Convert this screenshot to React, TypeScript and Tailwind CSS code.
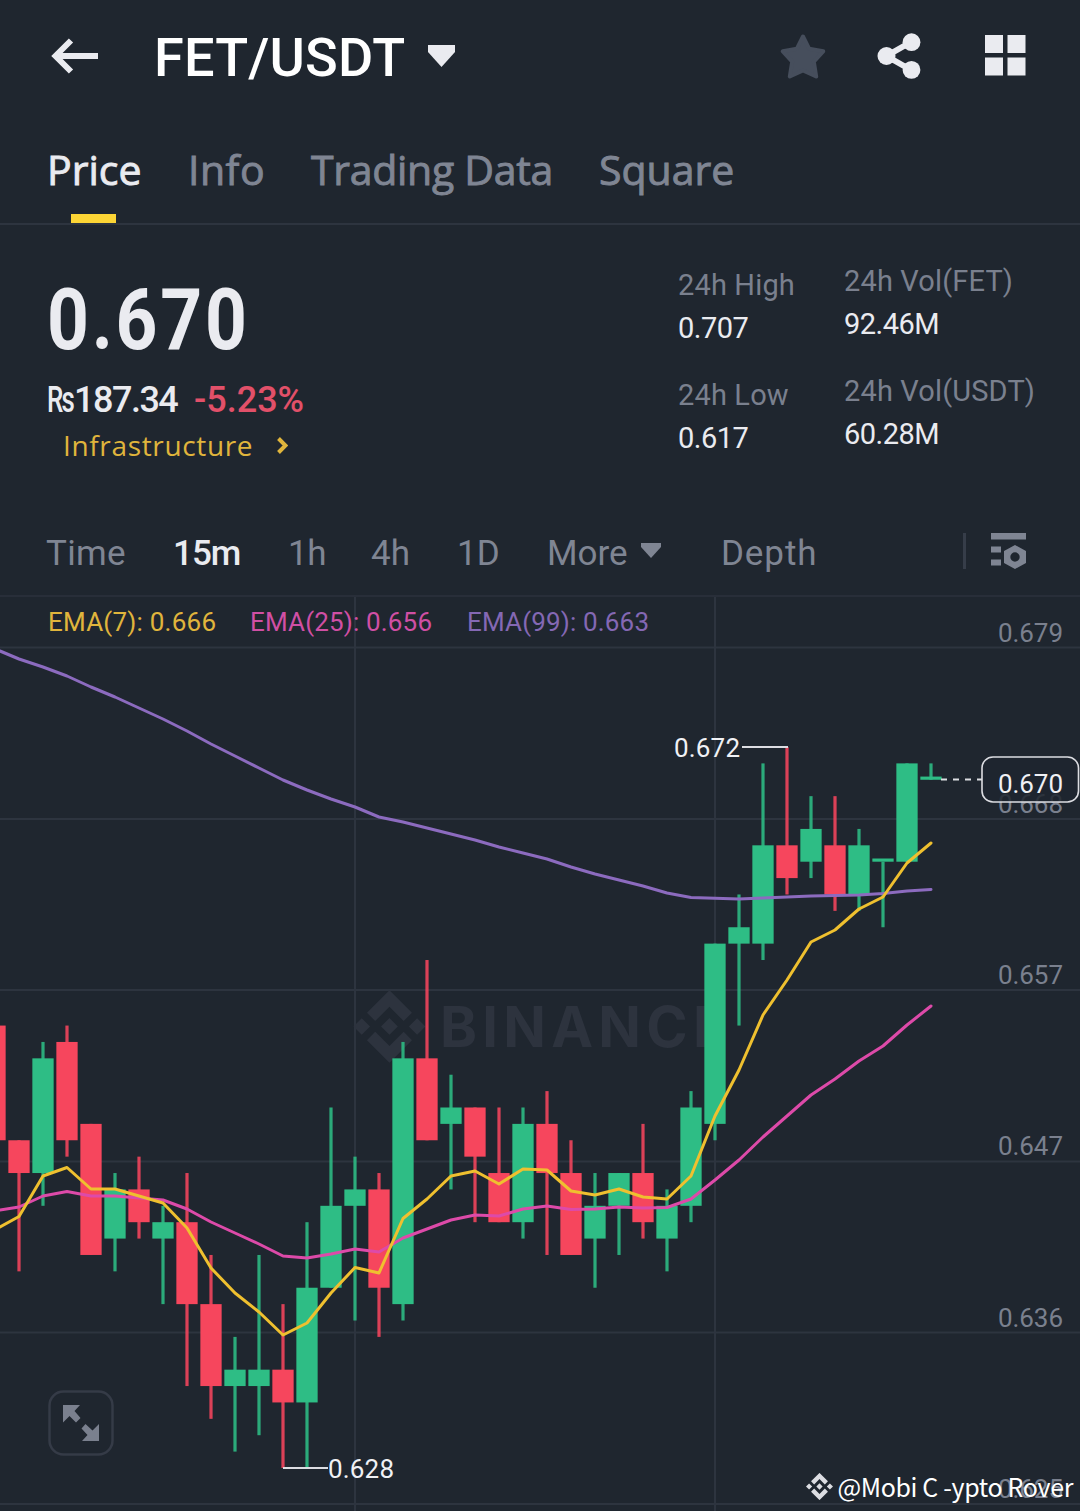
import React from 'react';

type Candle = [open: number, close: number, high: number, low: number];

// prices in thousandths, oldest first
const candles: Candle[] = [
  [655, 648, 655, 648], [648, 646, 648, 640], [646, 653, 654, 644], [654, 648, 655, 647],
  [649, 641, 649, 641], [642, 645, 646, 640], [645, 643, 647, 642], [642, 643, 644, 638],
  [643, 638, 646, 633], [638, 633, 641, 631], [633, 634, 636, 629], [633, 634, 641, 630],
  [634, 632, 638, 628], [632, 639, 643, 628], [639, 644, 650, 639], [644, 645, 647, 637],
  [645, 639, 646, 636], [638, 653, 654, 637], [653, 648, 659, 648], [649, 650, 652, 645],
  [650, 647, 650, 643], [646, 643, 650, 643], [643, 649, 650, 642], [649, 646, 651, 641],
  [646, 641, 648, 641], [642, 644, 646, 639], [644, 646, 646, 641], [646, 643, 649, 642],
  [642, 644, 645, 640], [644, 650, 651, 643], [649, 660, 660, 648], [660, 661, 663, 655],
  [660, 666, 671, 659], [666, 664, 672, 663], [665, 667, 669, 664], [666, 663, 669, 662],
  [663, 666, 667, 662], [665, 665, 665, 661], [665, 671, 671, 665], [670, 670, 671, 670],
];

const ema7 = '0,1227 19,1216.5 43,1176 67,1167.5 91,1189 115,1189 139,1196 163,1203 187,1228 211,1268 235,1293 259,1312 283,1335 307,1323 331,1293 355,1267.5 379,1273 403,1218.5 427,1199 451,1176 475,1171 499,1184 523,1169 547,1170 571,1191 595,1195 619,1189 643,1197 667,1199 691,1176 715,1116 739,1070 763,1015 787,980 811,942 835,930 859,909 883,897 907,863 931,843';
const ema25 = '0,1210 19,1207 43,1196 67,1191.5 91,1196 115,1196 139,1198 163,1200 187,1209 211,1222 235,1233 259,1244 283,1256 307,1258 331,1254 355,1249 379,1252 403,1238 427,1229 451,1220 475,1215 499,1216 523,1209 547,1206 571,1209.5 595,1209 619,1207 643,1208 667,1207.5 691,1199 715,1180 739,1160 763,1137 787,1116 811,1095 835,1079 859,1061 883,1046 907,1025 931,1006';
const ema99 = '0,651 19,659 43,667 67,676 91,687 115,697 139,708 163,719 187,731 211,744 235,756 259,768 283,780 307,790 331,799 355,807 379,817 403,822 427,828 451,834 475,840 499,847 523,853 547,859 571,867 595,874 619,880 643,886 667,893 691,897.5 739,899 763,898 811,896 835,895.5 859,895 883,893.5 907,891 931,889.5';

const priceY = (price: number) => 747 + (672 - price) * 16.386;

const gridRows = [647.5, 819, 990, 1161.5, 1332.5, 1504];
const axisLabels = [
  { text: '0.679', y: 642 },
  { text: '0.668', y: 813 },
  { text: '0.657', y: 984 },
  { text: '0.647', y: 1155 },
  { text: '0.636', y: 1327 },
  { text: '0.625', y: 1498 },
];

const BinanceMark: React.FC = () => (
  <path d="M38.2 53.7 63.3 28.7 88.3 53.7 102.9 39.2 63.3 -.4 23.7 39.1zM0 63.3 14.5 48.7 29.1 63.3 14.5 77.8zM38.2 72.8 63.3 97.9 88.3 72.8 102.9 87.4 63.3 127 23.7 87.4zM97.5 63.3 112 48.7 126.6 63.3 112 77.8zM48.5 63.3 63.3 48.5 78 63.3 63.3 78z" />
);

const Header: React.FC = () => (
  <header className="flex h-28 items-center pl-[51px] pr-[54px] text-[#eaebf0]">
    <svg className="h-9 w-[47px] shrink-0" viewBox="0 0 47 36" fill="none" stroke="currentColor" strokeWidth="6">
      <path d="M47 18H5M20 2.5 4.5 18 20 33.5" />
    </svg>
    <h1 className="ml-[56px] w-[253px] whitespace-nowrap pt-1 text-[54px] font-medium leading-none tracking-[0.2px] text-white">FET/USDT</h1>
    <svg className="ml-[21px] h-[22px] w-[27px]" viewBox="0 0 27 22" fill="currentColor">
      <path d="M0 0H27V7L13.5 22 0 7z" />
    </svg>
    <svg className="ml-auto h-[47px] w-[46px] text-[#464e5c]" viewBox="0 0 46 47" fill="currentColor" stroke="currentColor" strokeWidth="4" strokeLinejoin="round">
      <path d="M23 3.5 29.2 15.8 43.2 18.3 33.8 28.6 36.2 43.5 23 37.5 9.8 43.5 12.2 28.6 2.8 18.3 16.8 15.8z" />
    </svg>
    <svg className="ml-[51px] h-[46px] w-[44px]" viewBox="0 0 44 46" fill="currentColor">
      <path d="M34 9 9.5 23 34 37" fill="none" stroke="currentColor" strokeWidth="6" />
      <circle cx="34.5" cy="9.2" r="8.9" />
      <circle cx="9.5" cy="23" r="9" />
      <circle cx="34.5" cy="36.9" r="8.9" />
    </svg>
    <svg className="mb-px ml-[64px] h-[41px] w-[41px]" viewBox="0 0 41 41" fill="currentColor">
      <path d="M0 0h18v18H0zM22.5 0h18v18h-18zM0 22.5h18v18H0zM22.5 22.5h18v18h-18z" />
    </svg>
  </header>
);

const Tabs: React.FC = () => (
  <nav className="flex h-[113px] border-b-2 border-[#2d343f] pl-[47px] pt-[26px] font-['Open_Sans'] text-[41px] leading-[62px] text-[#7f8593] [-webkit-text-stroke:0.9px_currentColor]">
    <div className="flex w-[141px] flex-col justify-between text-[#eaebf0]">
      <span>Price</span>
      <span className="ml-6 h-[9px] w-[45px] bg-[#fcd535]" />
    </div>
    <span className="w-[123px] tracking-[0.5px]">Info</span>
    <span className="w-[288px] whitespace-nowrap tracking-[-0.3px]">Trading Data</span>
    <span>Square</span>
  </nav>
);

const Stat: React.FC<{ label: string; value: string }> = ({ label, value }) => (
  <div className="h-[110px] whitespace-nowrap">
    <div className="text-[29px] leading-[42px] tracking-[0.15px] text-[#7a808e]">{label}</div>
    <div className="text-[29px] leading-[45px] tracking-[-0.5px] text-[#eaebf0]">{value}</div>
  </div>
);

const Summary: React.FC = () => (
  <section className="flex h-[281px] pl-[47px]">
    <div className="w-[631px] pt-[50px]">
      <div className="h-[98px] w-[250px] origin-left scale-x-[.85] text-[86px] font-bold leading-[90px] tracking-[3.2px] text-[#eaebf0]">0.670</div>
      <div className="flex h-[52px] items-center whitespace-nowrap pt-0.5 text-[36px] font-medium leading-none">
        <span className="w-[27px] origin-left scale-x-[.72] text-[#eaebf0]">₨</span>
        <span className="w-[120px] tracking-[-1.5px] text-[#eaebf0]">187.34</span>
        <span className="text-[#e25069]">-5.23%</span>
      </div>
      <div className="flex h-[40px] items-center pl-4 font-['Open_Sans'] text-[28px] leading-none text-[#e0b53c]">
        <span className="w-[214px] tracking-[0.65px]">Infrastructure</span>
        <svg className="h-[17px] w-[11px]" viewBox="0 0 11 17" fill="none" stroke="currentColor" strokeWidth="4">
          <path d="M1.5 1.5 8.5 8.5 1.5 15.5" />
        </svg>
      </div>
    </div>
    <div className="w-[166px] pt-[39px]">
      <Stat label="24h High" value="0.707" />
      <Stat label="24h Low" value="0.617" />
    </div>
    <div className="pt-[35px]">
      <Stat label="24h Vol(FET)" value="92.46M" />
      <Stat label="24h Vol(USDT)" value="60.28M" />
    </div>
  </section>
);

const IntervalBar: React.FC = () => (
  <div className="flex h-[91px] items-center whitespace-nowrap border-b-2 border-[#282e39] pl-[46px] text-[35px] leading-none text-[#7f8593]">
    <div className="flex pt-1.5">
      <span className="w-[127px] tracking-[0.3px]">Time</span>
      <span className="w-[115px] font-medium tracking-[-1px] text-[#eaebf0]">15m</span>
      <span className="w-[83px] tracking-[-0.5px]">1h</span>
      <span className="w-[86px]">4h</span>
      <span className="w-[90px]">1D</span>
      <span className="w-[94px]">More</span>
    </div>
    <svg className="h-[15px] w-5" viewBox="0 0 20 15" fill="currentColor">
      <path d="M0 0H20V4L10 15 0 4z" />
    </svg>
    <span className="ml-[60px] w-[242px] pt-1.5 tracking-[0.9px]">Depth</span>
    <span className="h-9 w-[3px] bg-[#363d49]" />
    <svg className="ml-[25px] mt-px h-9 w-[35px]" viewBox="0 0 35 36" fill="currentColor" fillRule="evenodd">
      <path d="M0 0H35V6.5H0zM0 13.5H10V19.5H0zM0 26.5H10V32.5H0z" />
      <path d="M24 12 35 18V30L24 36 13 30V18zM24 19.3a4.7 4.7 0 1 0 0 9.4 4.7 4.7 0 1 0 0-9.4z" />
    </svg>
  </div>
);

const Chart: React.FC = () => (
  <svg className="block h-[914px] w-[1080px]" viewBox="0 597 1080 914" fontSize="26">
    <g stroke="#2d343f" strokeWidth="2">
      {gridRows.map((y) => <line key={y} x1="0" x2="1080" y1={y} y2={y} />)}
      <line x1="355" x2="355" y1="597" y2="1511" />
      <line x1="715" x2="715" y1="597" y2="1511" />
    </g>

    <g fill="#2d333e">
      <g transform="translate(353.5 990.5) scale(.568)"><BinanceMark /></g>
      <text x="440" y="1047" fontFamily="Inter" fontWeight="700" fontSize="56" textLength="287">BINANCE</text>
    </g>

    {candles.map(([open, close, high, low], i) => {
      const x = -5 + i * 24;
      const top = priceY(Math.max(open, close));
      const bottom = priceY(Math.min(open, close));
      const bodyHeight = Math.max(bottom - top, 3.2);
      return (
        <g key={i} fill={close >= open ? '#2ebd85' : '#f6465d'}>
          <rect x={x - 1.6} y={priceY(high)} width="3.2" height={priceY(low) - priceY(high)} opacity=".88" />
          <rect x={x - 10.65} y={bottom - bodyHeight} width="21.3" height={bodyHeight} />
        </g>
      );
    })}

    <g fill="none" strokeWidth="3" strokeLinejoin="round" strokeLinecap="round">
      <polyline points={ema99} stroke="#8c6bbf" />
      <polyline points={ema25} stroke="#dd4aa9" />
      <polyline points={ema7} stroke="#efc02f" />
    </g>

    <text x="48" y="631" fill="#e0b53c" textLength="168">EMA(7): 0.666</text>
    <text x="250" y="631" fill="#d04fa4" textLength="182">EMA(25): 0.656</text>
    <text x="467" y="631" fill="#8468b4" textLength="182">EMA(99): 0.663</text>

    <g fill="#7a808e">
      {axisLabels.map(({ text, y }) => <text key={text} x="998" y={y} textLength="65">{text}</text>)}
    </g>

    <g stroke="#dcdde2" strokeWidth="2">
      <path d="M742 747H788M283 1468H328" />
      <path d="M941 779.5H982" strokeDasharray="6 6" />
    </g>
    <rect x="982" y="757" width="96.5" height="45" rx="11" fill="#1f262f" fillOpacity=".85" stroke="#dcdde2" strokeWidth="1.6" />
    <g fill="#f0f1f5">
      <text x="674" y="757" textLength="66">0.672</text>
      <text x="328" y="1478" textLength="66">0.628</text>
      <text x="998" y="793" textLength="65">0.670</text>
    </g>

    <rect x="49.5" y="1391.5" width="63" height="63" rx="14" fill="#1f262f" stroke="#353b47" strokeWidth="2.5" />
    <path d="M63 1405H80L74.5 1411 80.5 1418 76 1422.5 69.5 1416 63 1422.5zM99 1441H82L87.5 1435 81.5 1428.5 85.5 1424 92.5 1430.5 99 1424z" fill="#7a808e" />
  </svg>
);

const App: React.FC = () => {
  return (
    <div className="relative h-[1511px] w-[1080px] overflow-hidden bg-[#1f262f] font-['Roboto',sans-serif]">
      <Header />
      <Tabs />
      <Summary />
      <IntervalBar />
      <Chart />
      <div className="absolute bottom-[8px] right-[7px] flex items-center whitespace-pre text-white">
        <svg className="mr-1 size-[27px] text-[#dcdde2]" viewBox="0 0 126.6 126.6" fill="currentColor"><BinanceMark /></svg>
        <span className="font-['Noto_Sans_CJK_SC',sans-serif] text-[25px] leading-[34px] tracking-[-0.35px]">@Mobi C -ypto Rover</span>
      </div>
    </div>
  );
};

export default App;
